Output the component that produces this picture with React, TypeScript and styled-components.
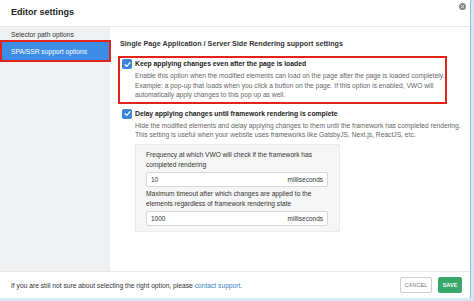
import React, { useState } from 'react'
import styled, { createGlobalStyle } from 'styled-components';

const GlobalStyle = createGlobalStyle`
    html, body {
        margin: 0;
        padding: 0;
    }
    body {
        font-family: "Liberation Sans", Arial, sans-serif;
        color: #333;
    }
`;

const Page = styled.div`
    width: 474px;
    height: 301px;
    background: #dbe6f4;
    display: flex;
    overflow: hidden;
`;
const Modal = styled.div`
    width: 470px;
    height: 298px;
    background: #fff;
    border-right: 1px solid #9db8e0;
    display: flex;
    flex-direction: column;
`;
const Header = styled.div`
    height: 27px;
    box-sizing: border-box;
    border-bottom: 1px solid #e8e8e8;
    display: flex;
    align-items: center;
    justify-content: space-between;
    padding: 0 4px 2px 11px;
`;
const H1 = styled.h1`
    font-size: 9px;
    font-weight: 700;
    margin: 0;
    color: #222;
`;
const Close = styled.button`
    width: 7px;
    height: 7px;
    border: 0;
    padding: 0;
    border-radius: 50%;
    background: #888;
    display: flex;
    align-items: center;
    justify-content: center;
    margin-top: -11px;
`;
const Body = styled.div`
    flex: 1;
    display: flex;
    min-height: 0;
`;
const Sidebar = styled.div`
    width: 110px;
    background: #f0f1f3;
    display: flex;
    flex-direction: column;
    padding-top: 2px;
`;
const NavItem = styled.div<{ $active?: boolean }>`
    height: ${p => p.$active ? '22px' : '11px'};
    box-sizing: border-box;
    display: flex;
    align-items: center;
    font-size: 6.7px;
    color: ${p => p.$active ? '#fff' : '#333'};
    background: ${p => p.$active ? '#3d8de6' : 'transparent'};
    border: ${p => p.$active ? '2px solid #e2231a' : '0'};
    padding-left: ${p => p.$active ? '9px' : '11px'};
    margin-right: ${p => p.$active ? '-1px' : '0'};
`;
const Content = styled.div`
    flex: 1;
    padding: 12px 23px 0 8px;
    display: flex;
    flex-direction: column;
    min-width: 0;
`;
const H2 = styled.h2`
    font-size: 7.2px;
    font-weight: 700;
    margin: 0 0 8px 2px;
    color: #333;
`;
const Option = styled.div<{ $highlight?: boolean }>`
    display: flex;
    gap: 3px;
    padding: 1px 3px ${p => p.$highlight ? '2px' : '0'} 2px;
    margin-top: ${p => p.$highlight ? '0' : '2px'};
    border: 2px solid ${p => p.$highlight ? '#e2231a' : 'transparent'};
`;
const Check = styled.span`
    width: 10px;
    height: 10px;
    border-radius: 2px;
    background: #3b86d8;
    flex-shrink: 0;
    display: flex;
    align-items: center;
    justify-content: center;
`;
const OptionText = styled.div`
    display: flex;
    flex-direction: column;
    min-width: 0;
`;
const Label = styled.div`
    font-size: 6.8px;
    font-weight: 700;
    color: #222;
    line-height: 9px;
    margin-bottom: 3px;
`;
const Desc = styled.div`
    font-size: 6.7px;
    color: #666;
    line-height: 9.6px;
    white-space: nowrap;
`;
const Panel = styled.div`
    margin-top: 4px;
    width: 205px;
    box-sizing: border-box;
    background: #f6f6f6;
    border: 1px solid #ebebeb;
    padding: 5px 11px 5px 10px;
    display: flex;
    flex-direction: column;
`;
const FieldLabel = styled.div`
    font-size: 6.6px;
    color: #333;
    line-height: 10px;
    margin-bottom: 2px;
`;
const Input = styled.div`
    height: 15px;
    box-sizing: border-box;
    background: #fff;
    border: 1px solid #d6d6d6;
    border-radius: 2px;
    display: flex;
    align-items: center;
    justify-content: space-between;
    padding: 0 4px;
    font-size: 6.5px;
    color: #333;
    & + div {
        margin-top: 2px;
    }
`;
const Footer = styled.div`
    height: 27px;
    box-sizing: border-box;
    border-top: 1px solid #e8e8e8;
    display: flex;
    align-items: center;
    justify-content: space-between;
    padding: 0 8px 0 11px;
`;
const FooterText = styled.div`
    font-size: 6.7px;
    color: #333;
`;
const SupportLink = styled.a`
    color: #3b80c8;
    text-decoration: none;
`;
const Buttons = styled.div`
    display: flex;
    gap: 6px;
`;
const Button = styled.button<{ $primary?: boolean }>`
    height: 16px;
    width: ${p => p.$primary ? '24px' : '32px'};
    padding: 0;
    font-family: inherit;
    font-size: 5.4px;
    letter-spacing: 0.1px;
    border-radius: 2px;
    border: 1px solid ${p => p.$primary ? '#3aa86b' : '#cfcfcf'};
    background: ${p => p.$primary ? '#3aa86b' : '#fff'};
    color: ${p => p.$primary ? '#fff' : '#777'};
    font-weight: ${p => p.$primary ? 700 : 400};
`;

function CheckIcon() {
    return (
        <svg width="7" height="7" viewBox="0 0 10 10">
            <path d="M1.5 5.2 L4 7.6 L8.6 2.4" fill="none" stroke="#fff" strokeWidth="1.8" strokeLinecap="round" strokeLinejoin="round" />
        </svg>
    )
}

export default function App() {

    const [frequency,] = useState('10');
    const [timeout,] = useState('1000');

    return (
        <Page>
            <GlobalStyle />
            <Modal>
                <Header>
                    <H1>Editor settings</H1>
                    <Close aria-label="close">
                        <svg width="5" height="5" viewBox="0 0 10 10">
                            <path d="M2.5 2.5 L7.5 7.5 M7.5 2.5 L2.5 7.5" stroke="#fff" strokeWidth="1.8" />
                        </svg>
                    </Close>
                </Header>
                <Body>
                    <Sidebar>
                        <NavItem>Selector path options</NavItem>
                        <NavItem $active>SPA/SSR support options</NavItem>
                    </Sidebar>
                    <Content>
                        <H2>Single Page Application / Server Side Rendering support settings</H2>
                        <Option $highlight>
                            <Check><CheckIcon /></Check>
                            <OptionText>
                                <Label>Keep applying changes even after the page is loaded</Label>
                                <Desc>Enable this option when the modified elements can load on the page after the page is loaded completely.</Desc>
                                <Desc>Example: a pop-up that loads when you click a button on the page. If this option is enabled, VWO will</Desc>
                                <Desc>automatically apply changes to this pop up as well.</Desc>
                            </OptionText>
                        </Option>
                        <Option>
                            <Check><CheckIcon /></Check>
                            <OptionText>
                                <Label>Delay applying changes until framework rendering is complete</Label>
                                <Desc>Hide the modified elements and delay applying changes to them until the framework has completed rendering.</Desc>
                                <Desc>This setting is useful when your website uses frameworks like GatsbyJS, Next.js, ReactJS, etc.</Desc>
                                <Panel>
                                    <FieldLabel>Frequency at which VWO will check if the framework has completed rendering</FieldLabel>
                                    <Input><span>{frequency}</span><span>milliseconds</span></Input>
                                    <FieldLabel>Maximum timeout after which changes are applied to the elements regardless of framework rendering state</FieldLabel>
                                    <Input><span>{timeout}</span><span>milliseconds</span></Input>
                                </Panel>
                            </OptionText>
                        </Option>
                    </Content>
                </Body>
                <Footer>
                    <FooterText>
                        If you are still not sure about selecting the right option, please <SupportLink href="#">contact support</SupportLink>.
                    </FooterText>
                    <Buttons>
                        <Button>CANCEL</Button>
                        <Button $primary>SAVE</Button>
                    </Buttons>
                </Footer>
            </Modal>
        </Page>
    )
}
